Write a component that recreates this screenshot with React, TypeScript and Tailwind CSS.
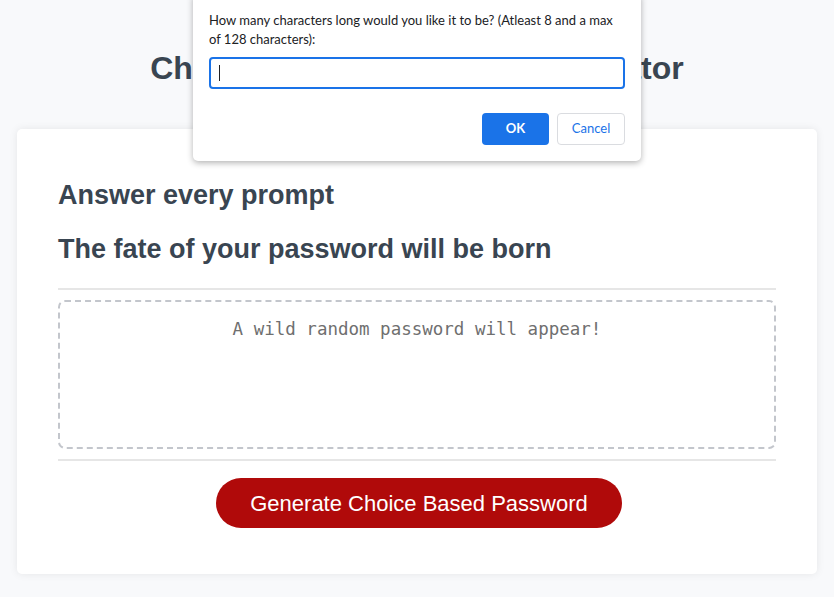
import React from "react";

const headingFont = { fontFamily: '"Liberation Sans", Arial, sans-serif' };

const PromptDialog = () => (
  <div
    className="absolute left-[193px] top-[-5px] w-[448px] rounded-b-[5px] bg-white px-4 pt-4 pb-4 shadow-[0_2px_6px_rgba(0,0,0,0.3)]"
    style={{ fontFamily: '"Segoe UI", Lato, "Noto Sans", sans-serif' }}
  >
    <p className="text-[13px] leading-[19px] text-[#202124]">
      How many characters long would you like it to be? (Atleast 8 and a max of 128 characters):
    </p>
    <div className="mt-[8px] flex h-8 items-center rounded-[4px] border-2 border-[#1a73e8] px-2">
      <span className="h-4 w-px bg-[#202124]" />
    </div>
    <div className="mt-6 flex justify-end gap-2">
      <button className="h-8 w-[67px] rounded-[4px] bg-[#1a73e8] text-[13px] font-bold text-white">OK</button>
      <button className="h-8 w-[68px] rounded-[4px] border border-[#dadce0] bg-white text-[13px] text-[#1a73e8]">
        Cancel
      </button>
    </div>
  </div>
);

export default function App() {
  return (
    <div className="relative min-h-[597px] bg-[#f8f9fb] pb-[23px]" style={headingFont}>
      <header className="pt-[50px] pb-[43px] text-center">
        <h1 className="text-[32px] font-bold leading-[36px] text-[#394551]">Choice Based Password Generator</h1>
      </header>

      <main className="mx-[17px] rounded-[5px] bg-white px-[41px] pt-[50px] pb-[46px] shadow-[0_0_8px_rgba(0,0,0,0.08)]">
        <h2 className="text-[27px] font-bold leading-8 text-[#394551]">Answer every prompt</h2>
        <h2 className="mt-[22px] text-[27px] font-bold leading-8 text-[#394551]">
          The fate of your password will be born
        </h2>

        <hr className="mt-[23px] border-t-2 border-[#e6e6e6]" />

        <div className="mt-[10px] h-[149px] rounded-[7px] border-2 border-dashed border-[#c3c6cc] pt-[15px] text-center">
          <p
            className="text-[17.5px] leading-6 text-[#6f6f6f]"
            style={{ fontFamily: '"DejaVu Sans Mono", "Liberation Mono", monospace' }}
          >
            A wild random password will appear!
          </p>
        </div>

        <hr className="mt-[10px] border-t-2 border-[#e6e6e6]" />

        <div className="mt-[17px] flex justify-center pl-[4px]">
          <button className="h-[50px] w-[406px] rounded-full bg-[#b00a0a] text-[22px] text-white">
            Generate Choice Based Password
          </button>
        </div>
      </main>

      <PromptDialog />
    </div>
  );
}
